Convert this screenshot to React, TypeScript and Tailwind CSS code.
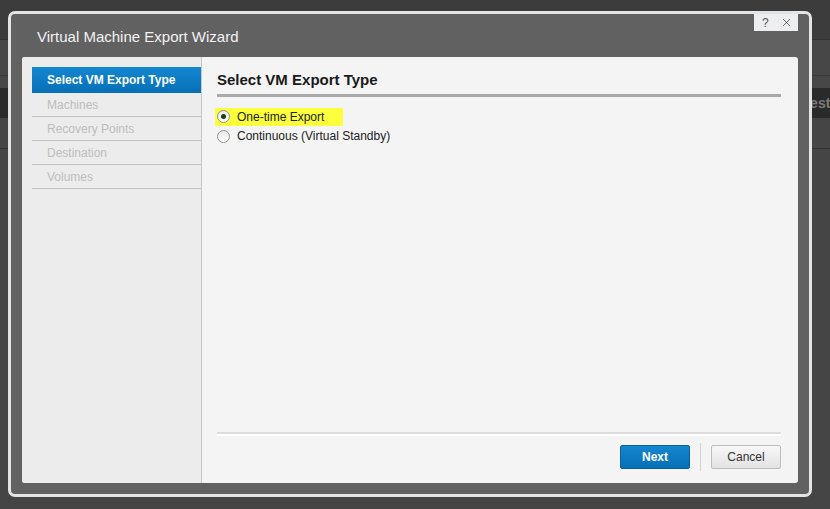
import { X } from "lucide-react";

const steps = ["Machines", "Recovery Points", "Destination", "Volumes"];

function Radio({ checked }: { checked?: boolean }) {
  return (
    <span className="flex h-[13px] w-[13px] items-center justify-center rounded-full border border-[#8f8f8f] bg-gradient-to-b from-[#e8e8e8] to-white">
      {checked && <span className="h-[5px] w-[5px] rounded-full bg-[#1f3d0c]" />}
    </span>
  );
}

export default function App() {
  return (
    <div className="relative h-[509px] w-[830px] overflow-hidden bg-[#454545] font-['Liberation_Sans',Arial,sans-serif]">
      {/* page behind the dialog */}
      <div className="flex flex-col">
        <div className="h-[40px] border-b border-[#333] bg-[#3c3c3c]" />
        <div className="h-[36px] border-b border-[#3a3a3a] bg-[#474747]" />
        <div className="h-[12px] bg-[#474747]" />
        <div className="flex h-[30px] items-center bg-[#2a2a2a] pl-[800px] text-[14px] font-bold text-[#7a7a7a] whitespace-nowrap">
          Destination
        </div>
        <div className="h-[31px] border-b border-[#333] bg-[#454545]" />
      </div>

      {/* wizard dialog */}
      <div className="absolute left-[8px] top-[11px] flex h-[486px] w-[804px] flex-col rounded-[7px] border-[3px] border-[#e2e4e6] bg-[#616161] px-[11px] pb-[11px]">
        <div className="flex h-[43px] items-start justify-between">
          <div className="pl-[15px] pt-[12px] text-[15px] text-[#f2f2f2]">Virtual Machine Export Wizard</div>
          <div className="flex h-[17px] w-[44px] items-center bg-[#eceef0] pl-[8px] text-[12px] text-[#555]">
            <span className="w-[18px]">?</span>
            <X size={13} strokeWidth={1.4} className="text-[#444]" />
          </div>
        </div>

        <div className="flex flex-1 overflow-hidden rounded-[3px] bg-[#f4f4f4]">
          {/* steps */}
          <div className="w-[180px] border-r border-[#c8c8c8] bg-[#ececec] pl-[10px] pt-[10px]">
            <div className="flex h-[26px] items-center bg-gradient-to-b from-[#1387d1] to-[#0670b6] pl-[15px] text-[12px] font-bold text-white">
              Select VM Export Type
            </div>
            {steps.map((s) => (
              <div
                key={s}
                className="flex h-[24px] items-center border-b border-[#c4c4c4] pl-[15px] text-[12px] text-[#bdbdbd]"
              >
                {s}
              </div>
            ))}
          </div>

          {/* content */}
          <div className="flex flex-1 flex-col pl-[15px] pr-[17px]">
            <div className="pt-[12px] text-[15px] font-bold text-[#1a1a1a]">Select VM Export Type</div>
            <div className="mt-[2px] h-[3px] bg-[#a9a9a9]" />

            <div className="mt-[11px] flex flex-col gap-[2px] text-[12px] text-[#222]">
              <div className="-ml-[2px] flex h-[18px] w-[128px] items-center gap-[7px] bg-[#fbff3c] pl-[2px]">
                <Radio checked />
                <span>One-time Export</span>
              </div>
              <div className="flex h-[17px] items-center gap-[7px]">
                <Radio />
                <span>Continuous (Virtual Standby)</span>
              </div>
            </div>

            <div className="flex-1" />

            <div className="h-[2px] bg-[#dcdcdc]" />
            <div className="h-[2px] bg-white" />
            <div className="flex h-[47px] items-center justify-end pb-[5px]">
              <button className="h-[24px] w-[70px] rounded-[2px] border border-[#0a5f9c] bg-gradient-to-b from-[#1486d0] to-[#0670b5] text-[12px] font-bold text-white">
                Next
              </button>
              <div className="mx-[10px] h-[28px] w-px bg-[#d2d2d2]" />
              <button className="h-[24px] w-[70px] rounded-[2px] border border-[#bcbcbc] bg-gradient-to-b from-[#f8f8f8] to-[#e2e2e2] text-[12px] text-[#333]">
                Cancel
              </button>
            </div>
          </div>
        </div>
      </div>
    </div>
  );
}
